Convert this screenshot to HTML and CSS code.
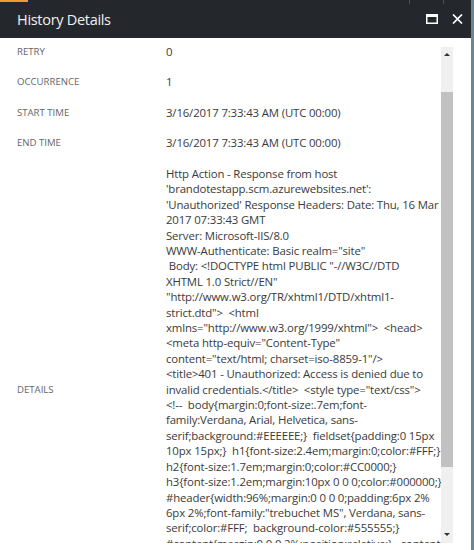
FILE: index.html
```html
<!DOCTYPE html>
<html lang="en">
<head>
  <meta charset="UTF-8">
  <meta name="viewport" content="width=device-width, initial-scale=1.0">
  <title>History Details</title>
  <link rel="stylesheet" href="styles.css">
</head>
<body>
  <div class="blade">
    <header class="blade-header">
      <span class="accent"></span>
      <span class="tick tick--one"></span>
      <span class="tick tick--two"></span>
      <h1 class="blade-title">History Details</h1>
      <div class="blade-actions">
        <svg class="icon" width="12" height="10" viewBox="0 0 12 10">
          <rect x="0.75" y="0.75" width="10.5" height="8.5" fill="none" stroke="#fff" stroke-width="1.5"/>
          <rect x="0" y="0" width="12" height="3" fill="#fff"/>
        </svg>
        <svg class="icon" width="11" height="10" viewBox="0 0 11 10">
          <path d="M1 0.5 L10 9.5 M10 0.5 L1 9.5" stroke="#fff" stroke-width="1.7"/>
        </svg>
      </div>
    </header>
    <div class="blade-body">
      <div class="scroll-pane">
        <div class="rows">
          <div class="row">
            <div class="label">RETRY</div>
            <div class="value">0</div>
          </div>
          <div class="row">
            <div class="label">OCCURRENCE</div>
            <div class="value">1</div>
          </div>
          <div class="row">
            <div class="label">START TIME</div>
            <div class="value">3/16/2017 7:33:43 AM (UTC 00:00)</div>
          </div>
          <div class="row">
            <div class="label">END TIME</div>
            <div class="value">3/16/2017 7:33:43 AM (UTC 00:00)</div>
          </div>
          <div class="row row--details">
            <div class="label">DETAILS</div>
            <div class="value value--pre">Http Action - Response from host
'brandotestapp.scm.azurewebsites.net':
'Unauthorized' Response Headers: Date: Thu, 16 Mar
2017 07:33:43 GMT
Server: Microsoft-IIS/8.0
WWW-Authenticate: Basic realm="site"
 Body: &lt;!DOCTYPE html PUBLIC "-//W3C//DTD
XHTML 1.0 Strict//EN"
"http://www.w3.org/TR/xhtml1/DTD/xhtml1-
strict.dtd"&gt;  &lt;html
xmlns="http://www.w3.org/1999/xhtml"&gt;  &lt;head&gt;
&lt;meta http-equiv="Content-Type"
content="text/html; charset=iso-8859-1"/&gt;
&lt;title&gt;401 - Unauthorized: Access is denied due to
invalid credentials.&lt;/title&gt;  &lt;style type="text/css"&gt;
&lt;!--  body{margin:0;font-size:.7em;font-
family:Verdana, Arial, Helvetica, sans-
serif;background:#EEEEEE;}  fieldset{padding:0 15px
10px 15px;}  h1{font-size:2.4em;margin:0;color:#FFF;}
h2{font-size:1.7em;margin:0;color:#CC0000;}
h3{font-size:1.2em;margin:10px 0 0 0;color:#000000;}
#header{width:96%;margin:0 0 0 0;padding:6px 2%
6px 2%;font-family:"trebuchet MS", Verdana, sans-
serif;color:#FFF;  background-color:#555555;}
#content{margin:0 0 0 2%;position:relative;}  .content-
container{background:#FFF;width:96%;margin-
top:8px;padding:10px;position:relative;}  --&gt;
&lt;/style&gt;  &lt;/head&gt;  &lt;body&gt;  &lt;div
id="header"&gt;&lt;h1&gt;Server Error&lt;/h1&gt;&lt;/div&gt;</div>
          </div>
        </div>
      </div>
      <div class="scrollbar">
        <span class="arrow arrow--up"></span>
        <span class="thumb"></span>
        <span class="arrow arrow--down"></span>
      </div>
    </div>
  </div>
</body>
</html>
```

FILE: styles.css
```css
body {
  margin: 0;
  background: #6b8599;
  font-family: "Open Sans", "Noto Sans", sans-serif;
}

.blade {
  width: 471px;
  height: 550px;
  background: #fff;
  display: flex;
  flex-direction: column;
}

.blade-header {
  position: relative;
  height: 38px;
  background: #24282c;
  display: flex;
  align-items: center;
  justify-content: space-between;
  padding: 0 8px 0 17px;
}

.accent {
  position: absolute;
  left: 0;
  top: 0;
  width: 28px;
  height: 2px;
  background: #f29a2e;
}

.tick {
  position: absolute;
  top: 0;
  width: 1px;
  height: 4px;
  background: #4a5056;
}

.tick--one {
  left: 409px;
}

.tick--two {
  left: 443px;
}

.blade-title {
  margin: 0;
  font-size: 14.5px;
  font-weight: 400;
  color: #f0f0f0;
  letter-spacing: -0.3px;
}

.blade-actions {
  display: flex;
  align-items: center;
  gap: 14px;
}

.icon {
  display: block;
}

.blade-body {
  flex: 1;
  display: flex;
  padding: 9px 18px 7px 0;
  min-height: 0;
}

.scroll-pane {
  width: 441px;
  overflow: hidden;
}

.rows {
  margin-top: -11px;
}

.row {
  display: flex;
  padding: 7.6px 0;
  line-height: 15.4px;
}

.label {
  width: 166px;
  padding-left: 17px;
  box-sizing: border-box;
  flex-shrink: 0;
  font-size: 9.6px;
  color: #666;
}

.row--details .label {
  align-self: center;
}

.value {
  font-size: 11.4px;
  color: #3a3a3a;
  letter-spacing: -0.15px;
}

.value--pre {
  white-space: pre;
}

.scrollbar {
  width: 12px;
  background: #f0f0f0;
  position: relative;
  display: flex;
  flex-direction: column;
  align-items: center;
}

.arrow {
  width: 0;
  height: 0;
  border-left: 3px solid transparent;
  border-right: 3px solid transparent;
}

.arrow--up {
  margin-top: 6px;
  border-bottom: 3px solid #333;
}

.arrow--down {
  margin-top: auto;
  margin-bottom: 7px;
  border-top: 3px solid #333;
}

.thumb {
  width: 12px;
  height: 375px;
  margin-top: 36px;
  background: #c1c1c1;
}
```
